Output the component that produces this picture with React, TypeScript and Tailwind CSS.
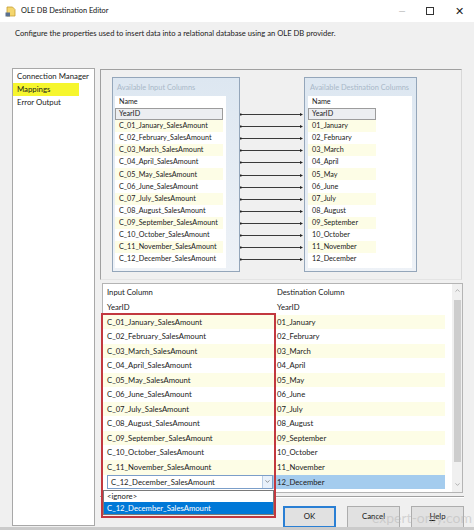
import { ChevronDown, ChevronUp } from 'lucide-react';

// Column names for the monthly sales mapping
const MONTHS = [
  'January', 'February', 'March', 'April', 'May', 'June',
  'July', 'August', 'September', 'October', 'November', 'December',
];
const pad = (n: number) => String(n).padStart(2, '0');
const INPUTS = MONTHS.map((m, i) => `C_${pad(i + 1)}_${m}_SalesAmount`);
const DESTS = MONTHS.map((m, i) => `${pad(i + 1)}_${m}`);

function TitleIcon() {
  return (
    <svg width="11" height="11" viewBox="0 0 11 11">
      <path d="M2 1h5.5L10 3.5V10H2z" fill="#f4d66e" stroke="#c79f35" strokeWidth="0.8" />
      <rect x="0.5" y="6.5" width="4.5" height="4" fill="#5b7190" />
    </svg>
  );
}

function TitleBar() {
  return (
    <div className="flex h-[22px] shrink-0 items-center bg-white pl-[5px]">
      <TitleIcon />
      <span className="ml-[5px] text-[7.4px] text-[#111]">OLE DB Destination Editor</span>
      <div className="ml-auto flex items-center text-[#222]">
        <span className="flex w-[28px] justify-center text-[9px] text-[#b8b8b8]">—</span>
        <span className="flex w-[28px] justify-center">
          <span className="block h-[8px] w-[8px] border border-[#333]" />
        </span>
        <span className="flex w-[30px] justify-center text-[11px] font-light">✕</span>
      </div>
    </div>
  );
}

type BoxProps = {
  title: string;
  items: string[];
  width: string;
  inset: string;
  listWidth: string;
  rowWidth: string;
};

// One of the draggable column tables in the mapping designer
function ColumnBox({ title, items, width, inset, listWidth, rowWidth }: BoxProps) {
  return (
    <div className={`${width} flex h-[195px] shrink-0 flex-col border border-[#94a6ba] bg-gradient-to-b from-[#dde7f1] to-[#eef2f7]`}>
      <div className={`${inset} flex h-[18px] items-center pl-[2px] pt-[1px] text-[7.4px] text-[#a9b8c8]`}>{title}</div>
      <div className={`${inset} ${listWidth} h-[172px] bg-white`}>
        <div className="flex h-[12px] items-center pl-[4px] pt-[1px] text-[7.2px]">Name</div>
        <div className={`${rowWidth} flex h-[12px] items-center border border-[#9c9c9c] bg-[#eceef1] pl-[3px] pt-[1px] text-[7.2px]`}>
          YearID
        </div>
        {items.map((it, i) => (
          <div
            key={it}
            className={`${rowWidth} flex h-[12.1px] items-center pl-[4px] pt-[1px] text-[7.2px] ${i % 2 === 0 ? 'bg-[#fdfde6]' : 'bg-white'}`}
          >
            {it}
          </div>
        ))}
      </div>
    </div>
  );
}

function Connectors() {
  const rows = Array.from({ length: 13 }, (_, i) => Math.round(37 + 12.1 * i) + 0.5);
  return (
    <svg width="64" height="195" className="shrink-0">
      {rows.map((y) => (
        <g key={y}>
          <line x1="0" y1={y} x2="61" y2={y} stroke="#3a3a3a" strokeWidth="1" />
          <path d={`M60 ${y - 1.5}L63 ${y}L60 ${y + 1.5}z`} fill="#222" />
          <rect x="0" y={y - 1} width="1.5" height="2" fill="#222" />
        </g>
      ))}
    </svg>
  );
}

function GridRow({ input, dest, index }: { input: string; dest: string; index: number }) {
  const yellow = index % 2 === 1;
  const last = index === 12;
  return (
    <div className="flex h-[14.55px] text-[7.7px]">
      <div className={`flex w-[170px] items-center pl-[4px] ${last ? '' : 'pt-[1px]'} ${yellow ? 'bg-[#fdfde6]' : 'bg-white'}`}>
        {last ? (
          <div className="flex h-[14px] w-[168px] items-center border border-[#7b9ec9] bg-white pl-[3px]">
            <span className="flex-1 pt-[1px]">{input}</span>
            <span className="flex h-full w-[10px] items-center justify-center border-l border-[#b9cde4] bg-[#e8f1fb]">
              <ChevronDown size={7} strokeWidth={1.5} />
            </span>
          </div>
        ) : (
          input
        )}
      </div>
      <div
        className={`flex w-[172px] items-center pl-[4px] pt-[1px] ${
          last ? 'bg-[#a4ccee]' : yellow ? 'bg-[#fdfde6]' : 'bg-white'
        }`}
      >
        {dest}
      </div>
      <div className="w-[7px] bg-white" />
    </div>
  );
}

function MappingGrid() {
  return (
    <div className="ml-[2px] mt-[3px] flex h-[210px] w-[361px] shrink-0 border border-[#b4b4b4] bg-white">
      <div className="flex w-[349px] flex-col">
        <div className="flex h-[16px] items-center pt-[1px] text-[7.7px]">
          <span className="w-[170px] pl-[4px]">Input Column</span>
          <span className="pl-[4px]">Destination Column</span>
        </div>
        <GridRow input="YearID" dest="YearID" index={0} />
        {INPUTS.map((inp, i) => (
          <GridRow key={inp} input={inp} dest={DESTS[i]} index={i + 1} />
        ))}
      </div>
      <div className="flex w-[10px] flex-col bg-[#f0f0f0]">
        <div className="flex h-[12px] items-center justify-center text-[#606060]">
          <ChevronUp size={7} strokeWidth={1.5} />
        </div>
        <div className="flex flex-1 justify-center pt-[4px]">
          <div className="h-[162px] w-[7px] bg-[#cdcdcd]" />
        </div>
        <div className="mb-[2px] flex h-[12px] items-center justify-center text-[#606060]">
          <ChevronDown size={7} strokeWidth={1.5} />
        </div>
      </div>
    </div>
  );
}

function DialogButton({ children, primary }: { children: React.ReactNode; primary?: boolean }) {
  return (
    <button
      className={`flex h-[22px] w-[53px] shrink-0 items-center justify-center bg-[#e1e1e1] text-[7.8px] text-[#111] ${
        primary ? 'border-2 border-[#2a7fd4]' : 'border border-[#adadad]'
      }`}
    >
      {children}
    </button>
  );
}

export default function App() {
  return (
    <div className="relative flex h-[530px] w-[474px] flex-col overflow-hidden bg-[#f0f0f0] font-['Lato',sans-serif] text-[#1b1b1b]">
      <TitleBar />

      <div className="flex h-[505px] flex-col overflow-hidden">
        <p className="h-[46px] shrink-0 pl-[15px] pt-[6px] text-[7.6px]">
          Configure the properties used to insert data into a relational database using an OLE DB provider.
        </p>

        <div className="flex shrink-0 items-start pl-[12px]">
          {/* page list */}
          <div className="h-[458px] w-[83px] shrink-0 border border-[#a8a8a8] bg-white pt-[1px] text-[7.8px]">
            <div className="flex h-[13px] items-center pl-[4px]">Connection Manager</div>
            <div className="flex h-[13px] w-[66px] items-center bg-[#f6f62e] pl-[4px]">Mappings</div>
            <div className="flex h-[13px] items-center pl-[4px]">Error Output</div>
          </div>

          <div className="ml-[5px] flex w-[364px] flex-col">
            {/* mapping designer */}
            <div className="mt-[1px] flex h-[211px] w-[362px] shrink-0 items-start border-b border-l border-r border-t border-b-[#e4e4e4] border-l-[#a0a0a0] border-r-[#d8d8d8] border-t-[#a0a0a0] pl-[11px] pt-[7px]">
              <ColumnBox
                title="Available Input Columns"
                items={INPUTS}
                width="w-[128px]"
                inset="ml-[2px]"
                listWidth="w-[111px]"
                rowWidth="w-[108px]"
              />
              <Connectors />
              <ColumnBox
                title="Available Destination Columns"
                items={DESTS}
                width="w-[113px]"
                inset="ml-[3px]"
                listWidth="w-[104px]"
                rowWidth="w-[68px]"
              />
            </div>

            <MappingGrid />

            <div className="mt-[3px] h-px w-full shrink-0 bg-[#a0a0a0]" />
            <div className="h-px w-full shrink-0 bg-white" />

            <div className="mt-[8px] flex shrink-0 justify-end gap-[11px]">
              <DialogButton primary>OK</DialogButton>
              <DialogButton>Cancel</DialogButton>
              <DialogButton>
                <span>
                  <span className="underline">H</span>elp
                </span>
              </DialogButton>
            </div>
          </div>
        </div>
      </div>
      <div className="h-[3px] shrink-0 bg-[#cbcbcb]" />

      {/* open dropdown of the last input cell */}
      <div className="absolute left-[103px] top-[490px] w-[171px] border border-[#7a7a7a] bg-white text-[7.7px]">
        <div className="flex h-[11px] items-center pl-[3px] pt-[1px]">&lt;ignore&gt;</div>
        <div className="flex h-[12px] items-center bg-[#0078d7] pl-[3px] pt-[1px] text-white">C_12_December_SalesAmount</div>
      </div>

      {/* red outline around the input column */}
      <div className="pointer-events-none absolute left-[101px] top-[313px] h-[205px] w-[175px] border-2 border-[#c2383f]" />

      <div className="pointer-events-none absolute left-[372px] top-[511px] text-[14px] leading-none text-[#b5b5b5]/50">
        expert-only.com
      </div>
    </div>
  );
}
